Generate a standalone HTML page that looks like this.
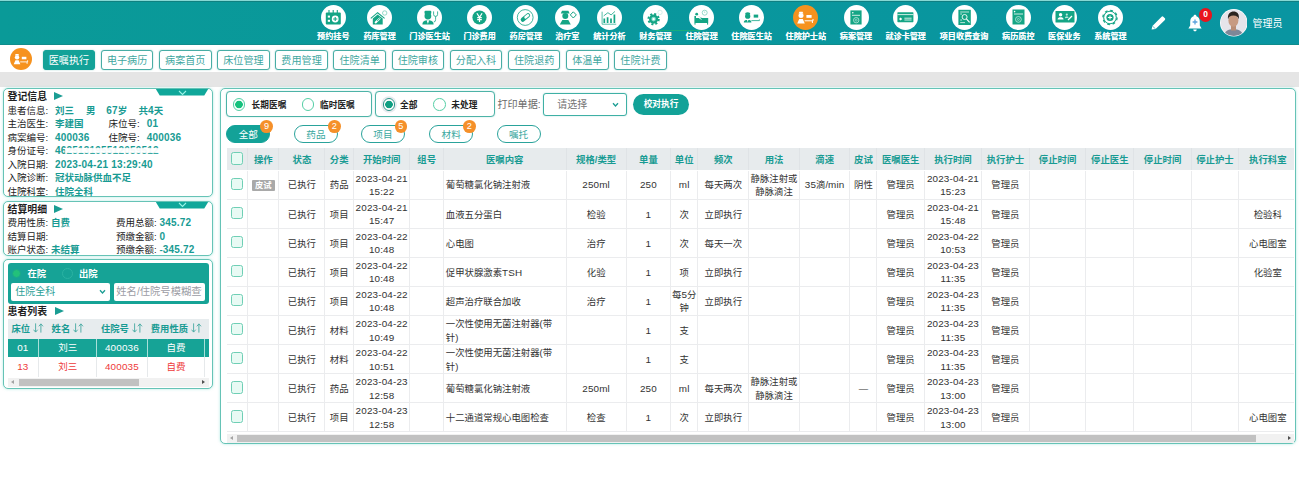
<!DOCTYPE html><html lang="zh-CN"><head><meta charset="utf-8"><title>住院护士站 - 医嘱执行</title><style>
*{box-sizing:border-box;margin:0;padding:0}
html,body{width:1299px;height:500px;overflow:hidden;background:#fff}
body{position:relative;font-family:"Liberation Sans","Noto Sans CJK SC",sans-serif;font-size:9.5px;color:#333;line-height:1}
.abs{position:absolute}
#hdr{position:absolute;left:0;top:0;width:1299px;height:45px;background:linear-gradient(90deg,#0a9a98 0%,#09979c 45%,#0995a1 100%);border-top:1px solid #86d8d4;border-bottom:1px solid #0f8c8c;box-shadow:inset 0 1px 0 rgba(20,110,108,.55)}
.nv{position:absolute;top:0;width:80px;margin-left:-40px;text-align:center;color:#fff}
.nv .ic{position:absolute;left:27.5px;top:4.6px;width:25px;height:25px;border-radius:50%;background:#fff}
.nv .ic.on{background:#f6921e}
.nv .ic svg{position:absolute;left:0;top:0;width:25px;height:25px}
.nv .lb{position:absolute;left:-10px;width:100px;top:32.2px;font-size:8.1px;font-weight:700;line-height:10px;text-shadow:0 0 .6px rgba(255,255,255,.7);white-space:nowrap;text-align:center}
#tabs{position:absolute;left:0;top:45px;width:1299px;height:27.4px;background:#fff}
#band{position:absolute;left:0;top:72.4px;width:1299px;height:14.6px;background:#e5e5e5}
.tab{position:absolute;top:50px;height:20px;border:1px solid #48ada5;border-radius:3px;color:#3fa79f;font-size:10.1px;line-height:20.4px;text-align:center;background:#fff;box-shadow:0 0 1.5px rgba(22,157,148,.5)}
.tab.on{background:#13a298;color:#fff;border-color:#13a298}
.panel{position:absolute;border:1px solid #66c3b6;border-radius:5px;background:#fff;box-shadow:0 0 3px rgba(110,215,200,.55)}
.ptitle{position:absolute;font-size:9.9px;font-weight:700;color:#1f1f1f;white-space:nowrap;line-height:12px}
.tri{position:absolute;width:0;height:0;border-left:9px solid #1a9d93;border-top:4.8px solid transparent;border-bottom:4.8px solid transparent}
.fold{position:absolute;width:53px;height:7px;background:#10a79a;clip-path:polygon(0 0,100% 0,92% 100%,8% 100%)}
.row{position:absolute;white-space:nowrap;font-size:9.5px;line-height:12px;color:#222}
.row b{color:#189b93;font-weight:700}

.n{font-size:9.9px;letter-spacing:.16px}
b .n,b.n{font-size:10px;letter-spacing:.2px}
.gb{position:absolute;top:91px;height:25.6px;border:1px solid #4db3a7;border-radius:4px;background:#fff;box-shadow:0 0 1.5px rgba(22,157,148,.4)}
.rd{position:absolute;width:12.6px;height:12.6px;border-radius:50%;border:1px solid #56cfa6;background:#fff}
.rd.on{background:radial-gradient(circle,#15c17d 0,#15c17d 3.5px,#f2fffb 4.1px)}
.rd.fc{border-color:#2b9488;box-shadow:0 0 0 1.8px #e6eaee;background:radial-gradient(circle,#0f9f82 0,#0f9f82 3.5px,#fff 4.1px)}
.rl{position:absolute;top:99.7px;font-size:8.7px;font-weight:700;color:#222;line-height:11px;white-space:nowrap}
.pill{position:absolute;top:124.6px;height:18.8px;border:1px solid #2aa39b;border-radius:9.4px;background:#fff;color:#3aa8a0;font-size:9.6px;line-height:18.2px;text-align:center}
.pill.on{background:#13a298;color:#fff;border-color:#13a298}
.bdg{position:absolute;top:120.1px;width:12.8px;height:12.8px;border-radius:50%;background:#f5902a;color:#fff;font-size:9.2px;line-height:12.8px;text-align:center}
.c{padding-top:1px;position:absolute;display:flex;align-items:center;justify-content:center;text-align:center;border-right:1px solid #ebecee;border-bottom:1px solid #ebecee;font-size:9.4px;line-height:13.4px;color:#333;white-space:nowrap}
.c.h{padding-top:2px;padding-bottom:0;color:#189b93;font-weight:700;font-size:9.4px;border-bottom:none;border-right-color:#dfe3e6}
.c.l{justify-content:flex-start;text-align:left;padding-left:2px}
.cbx{display:inline-block;width:12.5px;height:12.5px;border:1px solid #6fcfb5;border-radius:2.5px;background:#e8faf4;vertical-align:middle;margin-top:-4.4px}
.ps{display:inline-block;width:22.5px;height:11px;background:#a9a9a9;color:#fff;font-weight:700;font-size:8.3px;line-height:11px;border-radius:1px}
</style></head><body>
<div id="hdr"></div>
<div class="nv" style="left:333.3px"><div class="ic"><svg viewBox="0 0 25 25"><rect x="4.8" y="7.6" width="15" height="12" rx="1" fill="#14a585"/><path d="M8 5v3M12.2 5v3M16.3 5v3" stroke="#14a585" stroke-width="1.1"/><rect x="6.8" y="10.6" width="2.2" height="2" fill="#fff"/><rect x="6.8" y="14.8" width="2.2" height="2" fill="#fff"/><circle cx="14.2" cy="14" r="3.4" fill="#fff"/><path d="M14.2 11.9v4.2M12.1 14h4.2" stroke="#14a585" stroke-width="1.1"/></svg></div><div class="lb">预约挂号</div></div>
<div class="nv" style="left:379.6px"><div class="ic"><svg viewBox="0 0 25 25"><path d="M3.8 13.4 L10.6 7.7 L17.6 13.4" fill="none" stroke="#14a585" stroke-width="1.1"/><path d="M5.8 13.6 L10.7 9.6 L15.7 13.6 V19.5 H5.8Z" fill="#14a585"/><path d="M8.6 17.4 L12.6 13.6" stroke="#fff" stroke-width="2" stroke-linecap="round"/><path d="M10.4 15.7 L12.6 13.6" stroke="#14a585" stroke-width="0.9" stroke-linecap="round"/><circle cx="17.7" cy="8" r="2.2" fill="none" stroke="#7fd0bd" stroke-width="0.8"/></svg></div><div class="lb">药库管理</div></div>
<div class="nv" style="left:429.6px"><div class="ic"><svg viewBox="0 0 25 25"><circle cx="10.9" cy="11" r="3.4" fill="#14a585"/><rect x="7.5" y="5.8" width="6.8" height="3.2" rx="1" fill="#14a585"/><path d="M5.4 19.5 C5.4 16.2 7.6 15.2 10.9 15.2 C14.2 15.2 16.6 16.2 16.6 19.5Z" fill="#14a585"/><path d="M9.6 15.2 L10.9 19 L12.2 15.2Z" fill="#fff"/><path d="M16.6 6.4 V9.4 A2 2 0 0 0 20.6 9.4 V6.4 M18.6 11.4 V14.5 Q18.6 17 16.8 17" fill="none" stroke="#14a585" stroke-width="0.8"/></svg></div><div class="lb">门诊医生站</div></div>
<div class="nv" style="left:479.6px"><div class="ic"><svg viewBox="0 0 25 25"><circle cx="12.5" cy="12.5" r="7.1" fill="#14a585"/><path d="M9.9 8.2 L12.5 12.3 L15.1 8.2 M12.5 12.3 V17 M10.2 12.6 H14.8 M10.2 14.6 H14.8" fill="none" stroke="#fff" stroke-width="1.2"/></svg></div><div class="lb">门诊费用</div></div>
<div class="nv" style="left:525.8px"><div class="ic"><svg viewBox="0 0 25 25"><circle cx="12.2" cy="12.5" r="7.9" fill="none" stroke="#14a585" stroke-width="0.8"/><path d="M9.8 14.7 L15 10.3" stroke="#14a585" stroke-width="4.2" stroke-linecap="round"/><path d="M12.6 12.3 L15 10.3" stroke="#fff" stroke-width="2.6" stroke-linecap="round"/></svg></div><div class="lb">药房管理</div></div>
<div class="nv" style="left:567.3px"><div class="ic"><svg viewBox="0 0 25 25"><circle cx="10.3" cy="11" r="3" fill="#14a585"/><path d="M5.8 8.4 L7 5.8 H13.4 L14.6 8.4Z" fill="#14a585"/><path d="M4.8 19.5 L7.3 15 H13.3 L15.8 19.5Z" fill="#14a585"/><path d="M18.3 6.8 L21.3 9.9 L18.3 13 L15.3 9.9Z" fill="#fff" stroke="#14a585" stroke-width="1"/></svg></div><div class="lb">治疗室</div></div>
<div class="nv" style="left:609.4px"><div class="ic"><svg viewBox="0 0 25 25"><path d="M5.1 6.7 V19.2 H19.2" fill="none" stroke="#14a585" stroke-width="0.7"/><path d="M7.3 13.5V18 M10.6 12.2V18 M14 13.5V18 M17.4 9.6V18" stroke="#14a585" stroke-width="1.7"/><path d="M6.7 10.9 L10.9 7.7 L14.1 9.9 L18 6.4" fill="none" stroke="#14a585" stroke-width="0.8"/></svg></div><div class="lb">统计分析</div></div>
<div class="nv" style="left:655.5px"><div class="ic"><svg viewBox="0 0 25 25"><circle cx="10.6" cy="14.1" r="4.6" fill="#14a585"/><circle cx="10.6" cy="14.1" r="5.2" fill="none" stroke="#14a585" stroke-width="1.9" stroke-dasharray="2.05 2.03"/><circle cx="10.6" cy="14.1" r="2.3" fill="#7fdccb"/><circle cx="10.6" cy="14.1" r="1.2" fill="#fff"/><circle cx="17" cy="7.4" r="2.2" fill="none" stroke="#c9ece4" stroke-width="0.8"/></svg></div><div class="lb">财务管理</div></div>
<div class="nv" style="left:701.6px"><div class="ic"><svg viewBox="0 0 25 25"><path d="M5.4 10.9 H7 V13 H19.2 V18 H5.4Z" fill="#14a585"/><path d="M6 18V19.6 M18.6 18V19.6" stroke="#14a585" stroke-width="1"/><circle cx="7.7" cy="9.2" r="1.4" fill="#14a585"/><path d="M7.4 11.2 L12.5 14.4" stroke="#fff" stroke-width="0.9"/><path d="M8.5 10.8 L13 13.6 L13 13 Z" fill="#14a585"/><circle cx="15.7" cy="7.7" r="2.5" fill="none" stroke="#7fd0bd" stroke-width="0.8"/><path d="M15.7 6.5V7.9" stroke="#7fd0bd" stroke-width="0.7"/></svg></div><div class="lb">住院管理</div></div>
<div class="nv" style="left:751.6px"><div class="ic"><svg viewBox="0 0 25 25"><circle cx="8.7" cy="11.2" r="2.6" fill="#14a585"/><path d="M6.3 9.4 V8 Q8.7 6.4 11.1 8 V9.4Z" fill="#14a585"/><path d="M4.8 17.6 C4.8 15.4 6 15 8.7 15 C11.4 15 12.4 15.4 12.4 17.6Z" fill="#14a585"/><path d="M8 15 L8.7 17.3 L9.4 15Z" fill="#fff"/><rect x="14.7" y="9.6" width="4.5" height="3" fill="#14a585"/><path d="M12.4 15.6 H20.4 V14.4" fill="none" stroke="#14a585" stroke-width="0.8"/></svg></div><div class="lb">住院医生站</div></div>
<div class="nv" style="left:805.8px"><div class="ic on"><svg viewBox="0 0 25 25"><circle cx="8" cy="10.6" r="2.5" fill="#fff"/><path d="M5.6 8.6 L6.4 6.8 H9.6 L10.4 8.6Z" fill="#fff"/><path d="M4.2 18.4 L6.2 14 H9.8 L11.8 18.4Z" fill="#fff"/><rect x="13.4" y="10" width="5.2" height="2.8" fill="#fff"/><path d="M11.6 15.8 H20 V14 M19.4 15.8 V18" fill="none" stroke="#fff" stroke-width="1"/></svg></div><div class="lb">住院护士站</div></div>
<div class="nv" style="left:856.0px"><div class="ic"><svg viewBox="0 0 25 25"><rect x="6.4" y="5.4" width="11.2" height="14.1" fill="#14a585"/><circle cx="8.8" cy="7.8" r="0.8" fill="#fff"/><path d="M8 10.3 H16" stroke="#fff" stroke-width="0.8"/><circle cx="12.2" cy="15.2" r="2.7" fill="none" stroke="#bfeadf" stroke-width="0.8"/><circle cx="12.2" cy="15.2" r="1" fill="none" stroke="#bfeadf" stroke-width="0.6"/></svg></div><div class="lb">病案管理</div></div>
<div class="nv" style="left:905.7px"><div class="ic"><svg viewBox="0 0 25 25"><rect x="4.4" y="7.2" width="16" height="10" rx="0.6" fill="#14a585"/><path d="M4.4 9.6 H20.4" stroke="#fff" stroke-width="0.8"/><path d="M7.6 12.4 L9.2 14 L7.6 15.6 L6 14Z" fill="#fff"/><path d="M11.4 13.2 H18.6 M11.4 15 H18.6" stroke="#fff" stroke-width="0.8"/></svg></div><div class="lb">就诊卡管理</div></div>
<div class="nv" style="left:964.0px"><div class="ic"><svg viewBox="0 0 25 25"><rect x="6.4" y="4.8" width="12.4" height="15.2" fill="#14a585"/><path d="M8.2 7 H17 M8.2 9 H10 M8.2 15 H10 M8.2 17.6 H13" stroke="#fff" stroke-width="0.7"/><circle cx="12.6" cy="12" r="2.5" fill="none" stroke="#fff" stroke-width="0.9"/><path d="M14.4 13.8 L17.6 17.4" stroke="#fff" stroke-width="1.1"/></svg></div><div class="lb">项目收费查询</div></div>
<div class="nv" style="left:1018.3px"><div class="ic"><svg viewBox="0 0 25 25"><rect x="6.5" y="4.5" width="12" height="15" fill="#14a585"/><circle cx="8.6" cy="6.6" r="0.8" fill="#fff"/><path d="M8 9 H17" stroke="#fff" stroke-width="0.8"/><circle cx="12.4" cy="14.4" r="2.9" fill="none" stroke="#bfeadf" stroke-width="0.8"/><circle cx="12.4" cy="14.4" r="1" fill="none" stroke="#bfeadf" stroke-width="0.6"/></svg></div><div class="lb">病历质控</div></div>
<div class="nv" style="left:1064.3px"><div class="ic"><svg viewBox="0 0 25 25"><rect x="3.5" y="6" width="19" height="11.5" rx="0.6" fill="#14a585"/><circle cx="8.6" cy="9.8" r="1.7" fill="#fff"/><path d="M5.6 14.6 C5.6 12.6 7 12.2 8.6 12.2 C10.2 12.2 11.6 12.6 11.6 14.6Z" fill="#fff"/><circle cx="14.8" cy="9.6" r="1.1" fill="#bfeadf"/><path d="M13 13.2 C13 12 13.8 11.6 14.8 11.6 C15.8 11.6 16.4 12 16.6 12.8Z" fill="#bfeadf"/><path d="M16 15 L20 11" stroke="#fff" stroke-width="1.2"/></svg></div><div class="lb">医保业务</div></div>
<div class="nv" style="left:1110.4px"><div class="ic"><svg viewBox="0 0 25 25"><circle cx="12" cy="12.5" r="6.3" fill="none" stroke="#14a585" stroke-width="0.8"/><circle cx="12" cy="12.5" r="7.1" fill="none" stroke="#14a585" stroke-width="1.3" stroke-dasharray="2.8 2.78"/><circle cx="12" cy="12.5" r="5.8" fill="#fff"/><circle cx="12" cy="12.5" r="6.2" fill="none" stroke="#14a585" stroke-width="0.7"/><circle cx="12" cy="12.5" r="3.6" fill="#14a585"/><path d="M12 10.4V14.6M9.9 12.5H14.1" stroke="#fff" stroke-width="1.1"/></svg></div><div class="lb">系统管理</div></div>
<svg class="abs" style="left:1150px;top:14px" width="18" height="18" viewBox="0 0 18 18"><path d="M1.6 15.6 L2.4 11.9 L11.6 2.7 Q12.4 1.9 13.3 2.7 L14.9 4.3 Q15.6 5.1 14.9 5.9 L5.6 15.1Z" fill="#fff"/><path d="M2.7 12.2 L5.3 14.8" stroke="#1395a0" stroke-width="0.7"/></svg><svg class="abs" style="left:1186.5px;top:13.5px" width="16" height="19" viewBox="0 0 16 19"><path d="M8 0.8 C8.9 0.8 9.4 1.4 9.4 2.2 C11.8 2.9 12.8 5 12.8 7.6 V11.6 L14.6 14.4 H1.4 L3.2 11.6 V7.6 C3.2 5 4.2 2.9 6.6 2.2 C6.6 1.4 7.1 0.8 8 0.8Z" fill="#fff"/><path d="M6.2 15.6 H9.8 A1.8 1.8 0 0 1 6.2 15.6Z" fill="#fff"/><path d="M8 5.6V10.4M5.6 8H10.4" stroke="#5aa3dc" stroke-width="1.3"/></svg><div class="abs" style="left:1198.7px;top:8.1px;width:13.6px;height:13.6px;border-radius:50%;background:#e9141c;color:#fff;font-size:8.4px;font-weight:700;line-height:13.6px;text-align:center">0</div><svg class="abs" style="left:1219.5px;top:9.3px" width="27.6" height="27.6" viewBox="0 0 27.6 27.6"><defs><clipPath id="avc"><circle cx="13.8" cy="13.8" r="13.1"/></clipPath></defs><circle cx="13.8" cy="13.8" r="13.8" fill="#fff"/><g clip-path="url(#avc)"><rect width="27.6" height="27.6" fill="#e6e4ea"/><path d="M4 27.6 C4 22 8 20.2 13.4 20.2 C18.8 20.2 23 22 23 27.6Z" fill="#7d8798"/><rect x="11" y="16" width="5" height="5.5" fill="#b98d76"/><ellipse cx="13.4" cy="11.6" rx="5" ry="6.2" fill="#c79a82"/><path d="M8 10.4 C7.4 4.6 10.4 2.6 13.6 2.6 C17 2.6 19.6 4.8 18.8 10.4 C18 7.8 16.6 6.6 13.4 6.6 C10.4 6.6 8.8 7.8 8 10.4Z" fill="#2b2420"/></g></svg>
<div class="abs" style="left:656px;top:30px;width:45px;height:0.8px;background:#22c064;opacity:.55"></div>
<div class="abs" style="left:1252.4px;top:18.4px;color:#fff;font-size:10px;line-height:12px;white-space:nowrap">管理员</div>
<div id="tabs"></div><div id="band"></div>
<div class="abs" style="left:10px;top:47.5px;width:22px;height:22px;border-radius:50%;background:#f6921e"></div><svg class="abs" style="left:10px;top:47.5px" width="22" height="22" viewBox="0 0 25 25"><circle cx="8" cy="10.6" r="2.5" fill="#fff"/><path d="M5.6 8.6 L6.4 6.8 H9.6 L10.4 8.6Z" fill="#fff"/><path d="M4.2 18.4 L6.2 14 H9.8 L11.8 18.4Z" fill="#fff"/><rect x="13.4" y="10" width="5.2" height="2.8" fill="#fff"/><path d="M11.6 15.8 H20 V14 M19.4 15.8 V18" fill="none" stroke="#fff" stroke-width="1"/></svg>
<div class="tab on" style="left:42.7px;width:52.5px">医嘱执行</div>
<div class="tab" style="left:100.85px;width:52.5px">电子病历</div>
<div class="tab" style="left:159px;width:52.5px">病案首页</div>
<div class="tab" style="left:217.15px;width:52.5px">床位管理</div>
<div class="tab" style="left:275.3px;width:52.5px">费用管理</div>
<div class="tab" style="left:333.45px;width:52.5px">住院清单</div>
<div class="tab" style="left:391.6px;width:52.5px">住院审核</div>
<div class="tab" style="left:449.75px;width:52.5px">分配入科</div>
<div class="tab" style="left:507.9px;width:52.5px">住院退药</div>
<div class="tab" style="left:566.05px;width:42.5px">体温单</div>
<div class="tab" style="left:614.2px;width:52.7px">住院计费</div>
<div class="panel" style="left:3px;top:88px;width:210px;height:109.4px"></div>
<div class="ptitle" style="left:7.5px;top:91px">登记信息</div><div class="tri" style="left:54.2px;top:91.8px"></div>
<div class="fold" style="left:155.5px;top:88.6px"></div><svg class="abs" style="left:178px;top:89.5px" width="9" height="6" viewBox="0 0 9 6"><path d="M1 1 L4.5 4.5 L8 1" fill="none" stroke="#9af3e6" stroke-width="1.1"/></svg>
<div class="row" style="left:7.5px;top:104.70px">患者信息: <b class="abs" style="left:47.5px">刘三</b><b class="abs" style="left:78.5px">男</b><b class="abs" style="left:98.8px"><span class="n">67</span>岁</b><b class="abs" style="left:131px">共<span class="n">4</span>天</b></div>
<div class="row" style="left:7.5px;top:118.25px">主治医生: <b class="abs" style="left:47.5px">李建国</b><span class="abs" style="left:101px">床位号:</span><b class="abs" style="left:139.3px"><span class="n">01</span></b></div>
<div class="row" style="left:7.5px;top:131.80px">病案编号: <b class="abs" style="left:47.5px"><span class="n">400036</span></b><span class="abs" style="left:101px">住院号:</span><b class="abs" style="left:139.3px"><span class="n">400036</span></b></div>
<div class="row" style="left:7.5px;top:145.35px">身份证号: <b class="abs" style="left:47.5px"><span class="n">462513195512059512</span></b></div>
<div class="row" style="left:7.5px;top:158.90px">入院日期: <b class="abs" style="left:47.5px"><span class="n">2023-04-21 13:29:40</span></b></div>
<div class="row" style="left:7.5px;top:172.45px">入院诊断: <b class="abs" style="left:47.5px">冠状动脉供血不足</b></div>
<div class="row" style="left:7.5px;top:186.00px">住院科室: <b class="abs" style="left:47.5px">住院全科</b></div>
<div class="abs" style="left:66px;top:149.3px;width:94px;height:3.2px;background:#fff;opacity:.95;box-shadow:0 0 1px 0.6px rgba(255,255,255,.9)"></div>
<div class="panel" style="left:3px;top:201px;width:210px;height:55.2px"></div>
<div class="ptitle" style="left:7.5px;top:203.7px">结算明细</div><div class="tri" style="left:54.2px;top:204.5px"></div>
<div class="fold" style="left:155.5px;top:201.5px"></div><svg class="abs" style="left:178px;top:202px" width="9" height="6" viewBox="0 0 9 6"><path d="M1 1 L4.5 4.5 L8 1" fill="none" stroke="#9af3e6" stroke-width="1.1"/></svg>
<div class="row" style="left:7.5px;top:217.10px">费用性质: <b class="abs" style="left:43.5px">自费</b><span class="abs" style="left:108.5px">费用总额:</span><b class="abs" style="left:152px"><span class="n">345.72</span></b></div>
<div class="row" style="left:7.5px;top:230.60px">结算日期:<span class="abs" style="left:108.5px">预缴金额:</span><b class="abs" style="left:152px"><span class="n">0</span></b></div>
<div class="row" style="left:7.5px;top:244.10px">账户状态: <b class="abs" style="left:43.5px">未结算</b><span class="abs" style="left:108.5px">预缴余额:</span><b class="abs" style="left:152px">-<span class="n">345.72</span></b></div>
<div class="panel" style="left:3px;top:259px;width:210px;height:129.5px"></div>
<div class="abs" style="left:7.5px;top:262.5px;width:201px;height:41.5px;background:#16a396;border-radius:3px"></div>
<div class="abs" style="left:11.5px;top:268.5px;width:9.5px;height:9.5px;border-radius:50%;background:#22c17a;border:1.5px solid #1aa88c"></div>
<div class="abs" style="left:27.5px;top:267.5px;font-size:9.3px;font-weight:700;color:#fff;line-height:12px">在院</div>
<div class="abs" style="left:61.5px;top:268px;width:11px;height:11px;border-radius:50%;background:#16a396;border:1px solid #2bb3a3"></div>
<div class="abs" style="left:79px;top:267.5px;font-size:9.3px;font-weight:700;color:#fff;line-height:12px">出院</div>
<div class="abs" style="left:10.8px;top:283px;width:99.5px;height:18px;background:#fff;border-radius:2px;color:#2a9f97;font-size:10px;line-height:18px;padding-left:4.5px">住院全科<svg class="abs" style="left:88.5px;top:6px" width="7" height="6" viewBox="0 0 7 6"><path d="M1 1.3 L3.5 4 L6 1.3" fill="none" stroke="#1a9d93" stroke-width="1.3"/></svg></div>
<div class="abs" style="left:113.5px;top:283px;width:91.5px;height:18px;background:#fff;border-radius:2px"><div class="abs" style="left:2.8px;top:0;width:85.6px;height:18px;overflow:hidden;white-space:nowrap;color:#9c9ca4;font-size:10.3px;line-height:18px">姓名/住院号模糊查询</div></div>
<div class="ptitle" style="left:7.5px;top:306.4px">患者列表</div><div class="tri" style="left:54.8px;top:307px"></div>
<div class="abs" style="left:7.5px;top:318.5px;width:201.8px;height:20px;background:#e7ecee"></div>
<div class="abs" style="left:11.4px;top:322.5px;font-size:9.3px;font-weight:700;color:#189b93;line-height:12px;white-space:nowrap">床位<svg style="display:inline-block;vertical-align:-1.6px;margin-left:3px" width="11" height="10" viewBox="0 0 11 10"><path d="M2.6 0.4V9M0.5 6.7L2.6 9.1L4.7 6.7M7.9 9.6V0.9M5.8 3.3L7.9 0.9L10 3.3" fill="none" stroke="#45a9a1" stroke-width="0.9"/></svg></div>
<div class="abs" style="left:51.6px;top:322.5px;font-size:9.3px;font-weight:700;color:#189b93;line-height:12px;white-space:nowrap">姓名<svg style="display:inline-block;vertical-align:-1.6px;margin-left:3px" width="11" height="10" viewBox="0 0 11 10"><path d="M2.6 0.4V9M0.5 6.7L2.6 9.1L4.7 6.7M7.9 9.6V0.9M5.8 3.3L7.9 0.9L10 3.3" fill="none" stroke="#45a9a1" stroke-width="0.9"/></svg></div>
<div class="abs" style="left:101px;top:322.5px;font-size:9.3px;font-weight:700;color:#189b93;line-height:12px;white-space:nowrap">住院号<svg style="display:inline-block;vertical-align:-1.6px;margin-left:3px" width="11" height="10" viewBox="0 0 11 10"><path d="M2.6 0.4V9M0.5 6.7L2.6 9.1L4.7 6.7M7.9 9.6V0.9M5.8 3.3L7.9 0.9L10 3.3" fill="none" stroke="#45a9a1" stroke-width="0.9"/></svg></div>
<div class="abs" style="left:150.8px;top:322.5px;font-size:9.3px;font-weight:700;color:#189b93;line-height:12px;white-space:nowrap">费用性质<svg style="display:inline-block;vertical-align:-1.6px;margin-left:3px" width="11" height="10" viewBox="0 0 11 10"><path d="M2.6 0.4V9M0.5 6.7L2.6 9.1L4.7 6.7M7.9 9.6V0.9M5.8 3.3L7.9 0.9L10 3.3" fill="none" stroke="#45a9a1" stroke-width="0.9"/></svg></div>
<div class="abs" style="left:7.5px;top:338.5px;width:201.8px;height:18.7px;background:#16a396"></div>
<div class="abs" style="left:7.5px;top:338.5px;width:31.6px;height:18.7px;line-height:18.7px;text-align:center;color:#fff;font-size:9.5px;border-right:1px solid #a8e0d9"><span class="n">01</span></div>
<div class="abs" style="left:39.1px;top:338.5px;width:58.1px;height:18.7px;line-height:18.7px;text-align:center;color:#fff;font-size:9.5px;border-right:1px solid #a8e0d9">刘三</div>
<div class="abs" style="left:97.2px;top:338.5px;width:50.5px;height:18.7px;line-height:18.7px;text-align:center;color:#fff;font-size:9.5px;border-right:1px solid #a8e0d9"><span class="n">400036</span></div>
<div class="abs" style="left:147.7px;top:338.5px;width:57.5px;height:18.7px;line-height:18.7px;text-align:center;color:#fff;font-size:9.5px;border-right:1px solid #a8e0d9">自费</div>
<div class="abs" style="left:7.5px;top:357.2px;width:31.6px;height:20.3px;line-height:20px;text-align:center;color:#ee3a3a;font-size:9.5px;border-right:1px solid #e6e9eb"><span class="n">13</span></div>
<div class="abs" style="left:39.1px;top:357.2px;width:58.1px;height:20.3px;line-height:20px;text-align:center;color:#ee3a3a;font-size:9.5px;border-right:1px solid #e6e9eb">刘三</div>
<div class="abs" style="left:97.2px;top:357.2px;width:50.5px;height:20.3px;line-height:20px;text-align:center;color:#ee3a3a;font-size:9.5px;border-right:1px solid #e6e9eb"><span class="n">400035</span></div>
<div class="abs" style="left:147.7px;top:357.2px;width:57.5px;height:20.3px;line-height:20px;text-align:center;color:#ee3a3a;font-size:9.5px;border-right:1px solid #e6e9eb">自费</div>
<div class="abs" style="left:7.5px;top:378.3px;width:201.8px;height:8.3px;background:#f1f1f1"></div>
<div class="abs" style="left:18.6px;top:379.3px;width:120.4px;height:6.3px;background:#c1c1c1"></div>
<div class="abs" style="left:11px;top:380.4px;width:0;height:0;border-right:3px solid #a3a3a3;border-top:2.2px solid transparent;border-bottom:2.2px solid transparent"></div>
<div class="abs" style="left:202px;top:380.4px;width:0;height:0;border-left:3px solid #505050;border-top:2.2px solid transparent;border-bottom:2.2px solid transparent"></div>
<div class="panel" style="left:220px;top:88.2px;width:1076px;height:356.3px"></div>
<div class="gb" style="left:225.5px;width:146px"></div><div class="gb" style="left:375px;width:119.5px"></div>
<div class="rd on" style="left:232.8px;top:98.3px;"></div>
<div class="rd" style="left:301.8px;top:98.3px;"></div>
<div class="rd on fc" style="left:382.5px;top:98.3px;"></div>
<div class="rd" style="left:433.3px;top:98.3px;"></div>
<div class="rl" style="left:251.6px">长期医嘱</div>
<div class="rl" style="left:320px">临时医嘱</div>
<div class="rl" style="left:400.1px">全部</div>
<div class="rl" style="left:451.3px">未处理</div>
<div class="abs" style="left:497.4px;top:98.5px;font-size:10.1px;line-height:12px;color:#6a6a6a;white-space:nowrap">打印单据:</div>
<div class="abs" style="left:543.2px;top:92.6px;width:84.3px;height:23.6px;border:1px solid #3fb0a5;border-radius:3px;background:#fff;color:#757575;font-size:10px;line-height:21.5px;padding-left:13px;box-shadow:0 0 1.5px rgba(22,157,148,.4)">请选择<svg class="abs" style="left:68px;top:8px" width="7" height="6" viewBox="0 0 7 6"><path d="M1 1.3 L3.5 4 L6 1.3" fill="none" stroke="#1a9d93" stroke-width="1.3"/></svg></div>
<div class="abs" style="left:633px;top:94px;width:56px;height:21px;border-radius:10.5px;background:#13a298;color:#fff;font-size:8.7px;font-weight:700;line-height:21px;text-align:center">校对执行</div>
<div class="pill on" style="left:226.2px;width:44.3px">全部</div>
<div class="bdg" style="left:260.1px">9</div>
<div class="pill" style="left:293.6px;width:44.6px">药品</div>
<div class="bdg" style="left:327.8px">2</div>
<div class="pill" style="left:360.9px;width:44px">项目</div>
<div class="bdg" style="left:394.5px">5</div>
<div class="pill" style="left:429px;width:44.3px">材料</div>
<div class="bdg" style="left:462.9px">2</div>
<div class="pill" style="left:496.5px;width:44.2px">嘱托</div>
<div class="abs" style="left:226.8px;top:148px;width:1067.5px;height:295px;overflow:hidden">
<div class="abs" style="left:0;top:0;width:1075px;height:22px;background:#e7ebed"></div>
<div class="c h" style="left:0.0px;top:0.00px;width:21.6px;height:22.00px"><div><span class="cbx"></span></div></div>
<div class="c h" style="left:21.6px;top:0.00px;width:30.9px;height:22.00px"><div>操作</div></div>
<div class="c h" style="left:52.5px;top:0.00px;width:46.2px;height:22.00px"><div>状态</div></div>
<div class="c h" style="left:98.7px;top:0.00px;width:28.3px;height:22.00px"><div>分类</div></div>
<div class="c h" style="left:127.0px;top:0.00px;width:56.7px;height:22.00px"><div>开始时间</div></div>
<div class="c h" style="left:183.7px;top:0.00px;width:33.3px;height:22.00px"><div>组号</div></div>
<div class="c h" style="left:217.0px;top:0.00px;width:122.8px;height:22.00px"><div>医嘱内容</div></div>
<div class="c h" style="left:339.8px;top:0.00px;width:60.1px;height:22.00px"><div>规格/类型</div></div>
<div class="c h" style="left:399.9px;top:0.00px;width:44.5px;height:22.00px"><div>单量</div></div>
<div class="c h" style="left:444.4px;top:0.00px;width:27.1px;height:22.00px"><div>单位</div></div>
<div class="c h" style="left:471.5px;top:0.00px;width:51.0px;height:22.00px"><div>频次</div></div>
<div class="c h" style="left:522.5px;top:0.00px;width:50.5px;height:22.00px"><div>用法</div></div>
<div class="c h" style="left:573.0px;top:0.00px;width:50.7px;height:22.00px"><div>滴速</div></div>
<div class="c h" style="left:623.7px;top:0.00px;width:27.0px;height:22.00px"><div>皮试</div></div>
<div class="c h" style="left:650.7px;top:0.00px;width:47.3px;height:22.00px"><div>医嘱医生</div></div>
<div class="c h" style="left:698.0px;top:0.00px;width:57.3px;height:22.00px"><div>执行时间</div></div>
<div class="c h" style="left:755.3px;top:0.00px;width:47.7px;height:22.00px"><div>执行护士</div></div>
<div class="c h" style="left:803.0px;top:0.00px;width:56.6px;height:22.00px"><div>停止时间</div></div>
<div class="c h" style="left:859.6px;top:0.00px;width:47.9px;height:22.00px"><div>停止医生</div></div>
<div class="c h" style="left:907.5px;top:0.00px;width:57.5px;height:22.00px"><div>停止时间</div></div>
<div class="c h" style="left:965.0px;top:0.00px;width:47.3px;height:22.00px"><div>停止护士</div></div>
<div class="c h" style="left:1012.3px;top:0.00px;width:58.4px;height:22.00px"><div>执行科室</div></div>
<div class="c " style="left:0.0px;top:22.65px;width:21.6px;height:29.07px"><div><span class="cbx"></span></div></div>
<div class="c " style="left:21.6px;top:22.65px;width:30.9px;height:29.07px"><div><span class="ps">皮试</span></div></div>
<div class="c " style="left:52.5px;top:22.65px;width:46.2px;height:29.07px"><div>已执行</div></div>
<div class="c " style="left:98.7px;top:22.65px;width:28.3px;height:29.07px"><div>药品</div></div>
<div class="c " style="left:127.0px;top:22.65px;width:56.7px;height:29.07px"><div><span class="n">2023-04-21</span><br><span class="n">15:22</span></div></div>
<div class="c " style="left:183.7px;top:22.65px;width:33.3px;height:29.07px"><div></div></div>
<div class="c l" style="left:217.0px;top:22.65px;width:122.8px;height:29.07px"><div>葡萄糖氯化钠注射液</div></div>
<div class="c " style="left:339.8px;top:22.65px;width:60.1px;height:29.07px"><div><span class="n">250ml</span></div></div>
<div class="c " style="left:399.9px;top:22.65px;width:44.5px;height:29.07px"><div><span class="n">250</span></div></div>
<div class="c " style="left:444.4px;top:22.65px;width:27.1px;height:29.07px"><div><span class="n">ml</span></div></div>
<div class="c " style="left:471.5px;top:22.65px;width:51.0px;height:29.07px"><div>每天两次</div></div>
<div class="c " style="left:522.5px;top:22.65px;width:50.5px;height:29.07px"><div>静脉注射或<br>静脉滴注</div></div>
<div class="c " style="left:573.0px;top:22.65px;width:50.7px;height:29.07px"><div><span class="n">35</span>滴/<span class="n">min</span></div></div>
<div class="c " style="left:623.7px;top:22.65px;width:27.0px;height:29.07px"><div>阴性</div></div>
<div class="c " style="left:650.7px;top:22.65px;width:47.3px;height:29.07px"><div>管理员</div></div>
<div class="c " style="left:698.0px;top:22.65px;width:57.3px;height:29.07px"><div><span class="n">2023-04-21</span><br><span class="n">15:23</span></div></div>
<div class="c " style="left:755.3px;top:22.65px;width:47.7px;height:29.07px"><div>管理员</div></div>
<div class="c " style="left:803.0px;top:22.65px;width:56.6px;height:29.07px"><div></div></div>
<div class="c " style="left:859.6px;top:22.65px;width:47.9px;height:29.07px"><div></div></div>
<div class="c " style="left:907.5px;top:22.65px;width:57.5px;height:29.07px"><div></div></div>
<div class="c " style="left:965.0px;top:22.65px;width:47.3px;height:29.07px"><div></div></div>
<div class="c " style="left:1012.3px;top:22.65px;width:58.4px;height:29.07px"><div></div></div>
<div class="c " style="left:0.0px;top:51.72px;width:21.6px;height:29.07px"><div><span class="cbx"></span></div></div>
<div class="c " style="left:21.6px;top:51.72px;width:30.9px;height:29.07px"><div></div></div>
<div class="c " style="left:52.5px;top:51.72px;width:46.2px;height:29.07px"><div>已执行</div></div>
<div class="c " style="left:98.7px;top:51.72px;width:28.3px;height:29.07px"><div>项目</div></div>
<div class="c " style="left:127.0px;top:51.72px;width:56.7px;height:29.07px"><div><span class="n">2023-04-21</span><br><span class="n">15:47</span></div></div>
<div class="c " style="left:183.7px;top:51.72px;width:33.3px;height:29.07px"><div></div></div>
<div class="c l" style="left:217.0px;top:51.72px;width:122.8px;height:29.07px"><div>血液五分蛋白</div></div>
<div class="c " style="left:339.8px;top:51.72px;width:60.1px;height:29.07px"><div>检验</div></div>
<div class="c " style="left:399.9px;top:51.72px;width:44.5px;height:29.07px"><div><span class="n">1</span></div></div>
<div class="c " style="left:444.4px;top:51.72px;width:27.1px;height:29.07px"><div>次</div></div>
<div class="c " style="left:471.5px;top:51.72px;width:51.0px;height:29.07px"><div>立即执行</div></div>
<div class="c " style="left:522.5px;top:51.72px;width:50.5px;height:29.07px"><div></div></div>
<div class="c " style="left:573.0px;top:51.72px;width:50.7px;height:29.07px"><div></div></div>
<div class="c " style="left:623.7px;top:51.72px;width:27.0px;height:29.07px"><div></div></div>
<div class="c " style="left:650.7px;top:51.72px;width:47.3px;height:29.07px"><div>管理员</div></div>
<div class="c " style="left:698.0px;top:51.72px;width:57.3px;height:29.07px"><div><span class="n">2023-04-21</span><br><span class="n">15:48</span></div></div>
<div class="c " style="left:755.3px;top:51.72px;width:47.7px;height:29.07px"><div>管理员</div></div>
<div class="c " style="left:803.0px;top:51.72px;width:56.6px;height:29.07px"><div></div></div>
<div class="c " style="left:859.6px;top:51.72px;width:47.9px;height:29.07px"><div></div></div>
<div class="c " style="left:907.5px;top:51.72px;width:57.5px;height:29.07px"><div></div></div>
<div class="c " style="left:965.0px;top:51.72px;width:47.3px;height:29.07px"><div></div></div>
<div class="c " style="left:1012.3px;top:51.72px;width:58.4px;height:29.07px"><div>检验科</div></div>
<div class="c " style="left:0.0px;top:80.79px;width:21.6px;height:29.07px"><div><span class="cbx"></span></div></div>
<div class="c " style="left:21.6px;top:80.79px;width:30.9px;height:29.07px"><div></div></div>
<div class="c " style="left:52.5px;top:80.79px;width:46.2px;height:29.07px"><div>已执行</div></div>
<div class="c " style="left:98.7px;top:80.79px;width:28.3px;height:29.07px"><div>项目</div></div>
<div class="c " style="left:127.0px;top:80.79px;width:56.7px;height:29.07px"><div><span class="n">2023-04-22</span><br><span class="n">10:48</span></div></div>
<div class="c " style="left:183.7px;top:80.79px;width:33.3px;height:29.07px"><div></div></div>
<div class="c l" style="left:217.0px;top:80.79px;width:122.8px;height:29.07px"><div>心电图</div></div>
<div class="c " style="left:339.8px;top:80.79px;width:60.1px;height:29.07px"><div>治疗</div></div>
<div class="c " style="left:399.9px;top:80.79px;width:44.5px;height:29.07px"><div><span class="n">1</span></div></div>
<div class="c " style="left:444.4px;top:80.79px;width:27.1px;height:29.07px"><div>次</div></div>
<div class="c " style="left:471.5px;top:80.79px;width:51.0px;height:29.07px"><div>每天一次</div></div>
<div class="c " style="left:522.5px;top:80.79px;width:50.5px;height:29.07px"><div></div></div>
<div class="c " style="left:573.0px;top:80.79px;width:50.7px;height:29.07px"><div></div></div>
<div class="c " style="left:623.7px;top:80.79px;width:27.0px;height:29.07px"><div></div></div>
<div class="c " style="left:650.7px;top:80.79px;width:47.3px;height:29.07px"><div>管理员</div></div>
<div class="c " style="left:698.0px;top:80.79px;width:57.3px;height:29.07px"><div><span class="n">2023-04-22</span><br><span class="n">10:53</span></div></div>
<div class="c " style="left:755.3px;top:80.79px;width:47.7px;height:29.07px"><div>管理员</div></div>
<div class="c " style="left:803.0px;top:80.79px;width:56.6px;height:29.07px"><div></div></div>
<div class="c " style="left:859.6px;top:80.79px;width:47.9px;height:29.07px"><div></div></div>
<div class="c " style="left:907.5px;top:80.79px;width:57.5px;height:29.07px"><div></div></div>
<div class="c " style="left:965.0px;top:80.79px;width:47.3px;height:29.07px"><div></div></div>
<div class="c " style="left:1012.3px;top:80.79px;width:58.4px;height:29.07px"><div>心电图室</div></div>
<div class="c " style="left:0.0px;top:109.86px;width:21.6px;height:29.07px"><div><span class="cbx"></span></div></div>
<div class="c " style="left:21.6px;top:109.86px;width:30.9px;height:29.07px"><div></div></div>
<div class="c " style="left:52.5px;top:109.86px;width:46.2px;height:29.07px"><div>已执行</div></div>
<div class="c " style="left:98.7px;top:109.86px;width:28.3px;height:29.07px"><div>项目</div></div>
<div class="c " style="left:127.0px;top:109.86px;width:56.7px;height:29.07px"><div><span class="n">2023-04-22</span><br><span class="n">10:48</span></div></div>
<div class="c " style="left:183.7px;top:109.86px;width:33.3px;height:29.07px"><div></div></div>
<div class="c l" style="left:217.0px;top:109.86px;width:122.8px;height:29.07px"><div>促甲状腺激素<span class="n">TSH</span></div></div>
<div class="c " style="left:339.8px;top:109.86px;width:60.1px;height:29.07px"><div>化验</div></div>
<div class="c " style="left:399.9px;top:109.86px;width:44.5px;height:29.07px"><div><span class="n">1</span></div></div>
<div class="c " style="left:444.4px;top:109.86px;width:27.1px;height:29.07px"><div>项</div></div>
<div class="c " style="left:471.5px;top:109.86px;width:51.0px;height:29.07px"><div>立即执行</div></div>
<div class="c " style="left:522.5px;top:109.86px;width:50.5px;height:29.07px"><div></div></div>
<div class="c " style="left:573.0px;top:109.86px;width:50.7px;height:29.07px"><div></div></div>
<div class="c " style="left:623.7px;top:109.86px;width:27.0px;height:29.07px"><div></div></div>
<div class="c " style="left:650.7px;top:109.86px;width:47.3px;height:29.07px"><div>管理员</div></div>
<div class="c " style="left:698.0px;top:109.86px;width:57.3px;height:29.07px"><div><span class="n">2023-04-23</span><br><span class="n">11:35</span></div></div>
<div class="c " style="left:755.3px;top:109.86px;width:47.7px;height:29.07px"><div>管理员</div></div>
<div class="c " style="left:803.0px;top:109.86px;width:56.6px;height:29.07px"><div></div></div>
<div class="c " style="left:859.6px;top:109.86px;width:47.9px;height:29.07px"><div></div></div>
<div class="c " style="left:907.5px;top:109.86px;width:57.5px;height:29.07px"><div></div></div>
<div class="c " style="left:965.0px;top:109.86px;width:47.3px;height:29.07px"><div></div></div>
<div class="c " style="left:1012.3px;top:109.86px;width:58.4px;height:29.07px"><div>化验室</div></div>
<div class="c " style="left:0.0px;top:138.93px;width:21.6px;height:29.07px"><div><span class="cbx"></span></div></div>
<div class="c " style="left:21.6px;top:138.93px;width:30.9px;height:29.07px"><div></div></div>
<div class="c " style="left:52.5px;top:138.93px;width:46.2px;height:29.07px"><div>已执行</div></div>
<div class="c " style="left:98.7px;top:138.93px;width:28.3px;height:29.07px"><div>项目</div></div>
<div class="c " style="left:127.0px;top:138.93px;width:56.7px;height:29.07px"><div><span class="n">2023-04-22</span><br><span class="n">10:48</span></div></div>
<div class="c " style="left:183.7px;top:138.93px;width:33.3px;height:29.07px"><div></div></div>
<div class="c l" style="left:217.0px;top:138.93px;width:122.8px;height:29.07px"><div>超声治疗联合加收</div></div>
<div class="c " style="left:339.8px;top:138.93px;width:60.1px;height:29.07px"><div>治疗</div></div>
<div class="c " style="left:399.9px;top:138.93px;width:44.5px;height:29.07px"><div><span class="n">1</span></div></div>
<div class="c " style="left:444.4px;top:138.93px;width:27.1px;height:29.07px"><div>每<span class="n">5</span>分<br>钟</div></div>
<div class="c " style="left:471.5px;top:138.93px;width:51.0px;height:29.07px"><div>立即执行</div></div>
<div class="c " style="left:522.5px;top:138.93px;width:50.5px;height:29.07px"><div></div></div>
<div class="c " style="left:573.0px;top:138.93px;width:50.7px;height:29.07px"><div></div></div>
<div class="c " style="left:623.7px;top:138.93px;width:27.0px;height:29.07px"><div></div></div>
<div class="c " style="left:650.7px;top:138.93px;width:47.3px;height:29.07px"><div>管理员</div></div>
<div class="c " style="left:698.0px;top:138.93px;width:57.3px;height:29.07px"><div><span class="n">2023-04-23</span><br><span class="n">11:35</span></div></div>
<div class="c " style="left:755.3px;top:138.93px;width:47.7px;height:29.07px"><div>管理员</div></div>
<div class="c " style="left:803.0px;top:138.93px;width:56.6px;height:29.07px"><div></div></div>
<div class="c " style="left:859.6px;top:138.93px;width:47.9px;height:29.07px"><div></div></div>
<div class="c " style="left:907.5px;top:138.93px;width:57.5px;height:29.07px"><div></div></div>
<div class="c " style="left:965.0px;top:138.93px;width:47.3px;height:29.07px"><div></div></div>
<div class="c " style="left:1012.3px;top:138.93px;width:58.4px;height:29.07px"><div></div></div>
<div class="c " style="left:0.0px;top:168.00px;width:21.6px;height:29.07px"><div><span class="cbx"></span></div></div>
<div class="c " style="left:21.6px;top:168.00px;width:30.9px;height:29.07px"><div></div></div>
<div class="c " style="left:52.5px;top:168.00px;width:46.2px;height:29.07px"><div>已执行</div></div>
<div class="c " style="left:98.7px;top:168.00px;width:28.3px;height:29.07px"><div>材料</div></div>
<div class="c " style="left:127.0px;top:168.00px;width:56.7px;height:29.07px"><div><span class="n">2023-04-22</span><br><span class="n">10:49</span></div></div>
<div class="c " style="left:183.7px;top:168.00px;width:33.3px;height:29.07px"><div></div></div>
<div class="c l" style="left:217.0px;top:168.00px;width:122.8px;height:29.07px"><div>一次性使用无菌注射器(带<br>针)</div></div>
<div class="c " style="left:339.8px;top:168.00px;width:60.1px;height:29.07px"><div></div></div>
<div class="c " style="left:399.9px;top:168.00px;width:44.5px;height:29.07px"><div><span class="n">1</span></div></div>
<div class="c " style="left:444.4px;top:168.00px;width:27.1px;height:29.07px"><div>支</div></div>
<div class="c " style="left:471.5px;top:168.00px;width:51.0px;height:29.07px"><div></div></div>
<div class="c " style="left:522.5px;top:168.00px;width:50.5px;height:29.07px"><div></div></div>
<div class="c " style="left:573.0px;top:168.00px;width:50.7px;height:29.07px"><div></div></div>
<div class="c " style="left:623.7px;top:168.00px;width:27.0px;height:29.07px"><div></div></div>
<div class="c " style="left:650.7px;top:168.00px;width:47.3px;height:29.07px"><div>管理员</div></div>
<div class="c " style="left:698.0px;top:168.00px;width:57.3px;height:29.07px"><div><span class="n">2023-04-23</span><br><span class="n">11:35</span></div></div>
<div class="c " style="left:755.3px;top:168.00px;width:47.7px;height:29.07px"><div>管理员</div></div>
<div class="c " style="left:803.0px;top:168.00px;width:56.6px;height:29.07px"><div></div></div>
<div class="c " style="left:859.6px;top:168.00px;width:47.9px;height:29.07px"><div></div></div>
<div class="c " style="left:907.5px;top:168.00px;width:57.5px;height:29.07px"><div></div></div>
<div class="c " style="left:965.0px;top:168.00px;width:47.3px;height:29.07px"><div></div></div>
<div class="c " style="left:1012.3px;top:168.00px;width:58.4px;height:29.07px"><div></div></div>
<div class="c " style="left:0.0px;top:197.07px;width:21.6px;height:29.07px"><div><span class="cbx"></span></div></div>
<div class="c " style="left:21.6px;top:197.07px;width:30.9px;height:29.07px"><div></div></div>
<div class="c " style="left:52.5px;top:197.07px;width:46.2px;height:29.07px"><div>已执行</div></div>
<div class="c " style="left:98.7px;top:197.07px;width:28.3px;height:29.07px"><div>材料</div></div>
<div class="c " style="left:127.0px;top:197.07px;width:56.7px;height:29.07px"><div><span class="n">2023-04-22</span><br><span class="n">10:51</span></div></div>
<div class="c " style="left:183.7px;top:197.07px;width:33.3px;height:29.07px"><div></div></div>
<div class="c l" style="left:217.0px;top:197.07px;width:122.8px;height:29.07px"><div>一次性使用无菌注射器(带<br>针)</div></div>
<div class="c " style="left:339.8px;top:197.07px;width:60.1px;height:29.07px"><div></div></div>
<div class="c " style="left:399.9px;top:197.07px;width:44.5px;height:29.07px"><div><span class="n">1</span></div></div>
<div class="c " style="left:444.4px;top:197.07px;width:27.1px;height:29.07px"><div>支</div></div>
<div class="c " style="left:471.5px;top:197.07px;width:51.0px;height:29.07px"><div></div></div>
<div class="c " style="left:522.5px;top:197.07px;width:50.5px;height:29.07px"><div></div></div>
<div class="c " style="left:573.0px;top:197.07px;width:50.7px;height:29.07px"><div></div></div>
<div class="c " style="left:623.7px;top:197.07px;width:27.0px;height:29.07px"><div></div></div>
<div class="c " style="left:650.7px;top:197.07px;width:47.3px;height:29.07px"><div>管理员</div></div>
<div class="c " style="left:698.0px;top:197.07px;width:57.3px;height:29.07px"><div><span class="n">2023-04-23</span><br><span class="n">11:35</span></div></div>
<div class="c " style="left:755.3px;top:197.07px;width:47.7px;height:29.07px"><div>管理员</div></div>
<div class="c " style="left:803.0px;top:197.07px;width:56.6px;height:29.07px"><div></div></div>
<div class="c " style="left:859.6px;top:197.07px;width:47.9px;height:29.07px"><div></div></div>
<div class="c " style="left:907.5px;top:197.07px;width:57.5px;height:29.07px"><div></div></div>
<div class="c " style="left:965.0px;top:197.07px;width:47.3px;height:29.07px"><div></div></div>
<div class="c " style="left:1012.3px;top:197.07px;width:58.4px;height:29.07px"><div></div></div>
<div class="c " style="left:0.0px;top:226.14px;width:21.6px;height:29.07px"><div><span class="cbx"></span></div></div>
<div class="c " style="left:21.6px;top:226.14px;width:30.9px;height:29.07px"><div></div></div>
<div class="c " style="left:52.5px;top:226.14px;width:46.2px;height:29.07px"><div>已执行</div></div>
<div class="c " style="left:98.7px;top:226.14px;width:28.3px;height:29.07px"><div>药品</div></div>
<div class="c " style="left:127.0px;top:226.14px;width:56.7px;height:29.07px"><div><span class="n">2023-04-23</span><br><span class="n">12:58</span></div></div>
<div class="c " style="left:183.7px;top:226.14px;width:33.3px;height:29.07px"><div></div></div>
<div class="c l" style="left:217.0px;top:226.14px;width:122.8px;height:29.07px"><div>葡萄糖氯化钠注射液</div></div>
<div class="c " style="left:339.8px;top:226.14px;width:60.1px;height:29.07px"><div><span class="n">250ml</span></div></div>
<div class="c " style="left:399.9px;top:226.14px;width:44.5px;height:29.07px"><div><span class="n">250</span></div></div>
<div class="c " style="left:444.4px;top:226.14px;width:27.1px;height:29.07px"><div><span class="n">ml</span></div></div>
<div class="c " style="left:471.5px;top:226.14px;width:51.0px;height:29.07px"><div>每天两次</div></div>
<div class="c " style="left:522.5px;top:226.14px;width:50.5px;height:29.07px"><div>静脉注射或<br>静脉滴注</div></div>
<div class="c " style="left:573.0px;top:226.14px;width:50.7px;height:29.07px"><div></div></div>
<div class="c " style="left:623.7px;top:226.14px;width:27.0px;height:29.07px"><div>—</div></div>
<div class="c " style="left:650.7px;top:226.14px;width:47.3px;height:29.07px"><div>管理员</div></div>
<div class="c " style="left:698.0px;top:226.14px;width:57.3px;height:29.07px"><div><span class="n">2023-04-23</span><br><span class="n">13:00</span></div></div>
<div class="c " style="left:755.3px;top:226.14px;width:47.7px;height:29.07px"><div>管理员</div></div>
<div class="c " style="left:803.0px;top:226.14px;width:56.6px;height:29.07px"><div></div></div>
<div class="c " style="left:859.6px;top:226.14px;width:47.9px;height:29.07px"><div></div></div>
<div class="c " style="left:907.5px;top:226.14px;width:57.5px;height:29.07px"><div></div></div>
<div class="c " style="left:965.0px;top:226.14px;width:47.3px;height:29.07px"><div></div></div>
<div class="c " style="left:1012.3px;top:226.14px;width:58.4px;height:29.07px"><div></div></div>
<div class="c " style="left:0.0px;top:255.21px;width:21.6px;height:29.07px"><div><span class="cbx"></span></div></div>
<div class="c " style="left:21.6px;top:255.21px;width:30.9px;height:29.07px"><div></div></div>
<div class="c " style="left:52.5px;top:255.21px;width:46.2px;height:29.07px"><div>已执行</div></div>
<div class="c " style="left:98.7px;top:255.21px;width:28.3px;height:29.07px"><div>项目</div></div>
<div class="c " style="left:127.0px;top:255.21px;width:56.7px;height:29.07px"><div><span class="n">2023-04-23</span><br><span class="n">12:58</span></div></div>
<div class="c " style="left:183.7px;top:255.21px;width:33.3px;height:29.07px"><div></div></div>
<div class="c l" style="left:217.0px;top:255.21px;width:122.8px;height:29.07px"><div>十二通道常规心电图检查</div></div>
<div class="c " style="left:339.8px;top:255.21px;width:60.1px;height:29.07px"><div>检查</div></div>
<div class="c " style="left:399.9px;top:255.21px;width:44.5px;height:29.07px"><div><span class="n">1</span></div></div>
<div class="c " style="left:444.4px;top:255.21px;width:27.1px;height:29.07px"><div>次</div></div>
<div class="c " style="left:471.5px;top:255.21px;width:51.0px;height:29.07px"><div>立即执行</div></div>
<div class="c " style="left:522.5px;top:255.21px;width:50.5px;height:29.07px"><div></div></div>
<div class="c " style="left:573.0px;top:255.21px;width:50.7px;height:29.07px"><div></div></div>
<div class="c " style="left:623.7px;top:255.21px;width:27.0px;height:29.07px"><div></div></div>
<div class="c " style="left:650.7px;top:255.21px;width:47.3px;height:29.07px"><div>管理员</div></div>
<div class="c " style="left:698.0px;top:255.21px;width:57.3px;height:29.07px"><div><span class="n">2023-04-23</span><br><span class="n">13:00</span></div></div>
<div class="c " style="left:755.3px;top:255.21px;width:47.7px;height:29.07px"><div>管理员</div></div>
<div class="c " style="left:803.0px;top:255.21px;width:56.6px;height:29.07px"><div></div></div>
<div class="c " style="left:859.6px;top:255.21px;width:47.9px;height:29.07px"><div></div></div>
<div class="c " style="left:907.5px;top:255.21px;width:57.5px;height:29.07px"><div></div></div>
<div class="c " style="left:965.0px;top:255.21px;width:47.3px;height:29.07px"><div></div></div>
<div class="c " style="left:1012.3px;top:255.21px;width:58.4px;height:29.07px"><div>心电图室</div></div>
<div class="abs" style="left:0;top:285.5px;width:1075px;height:9.2px;background:#f1f1f1"></div>
<div class="abs" style="left:10.6px;top:286.6px;width:1019px;height:7px;background:#c1c1c1"></div>
<div class="abs" style="left:3.2px;top:287.6px;width:0;height:0;border-right:3px solid #a3a3a3;border-top:2.4px solid transparent;border-bottom:2.4px solid transparent"></div>
<div class="abs" style="left:1061.3px;top:287.6px;width:0;height:0;border-left:3px solid #505050;border-top:2.4px solid transparent;border-bottom:2.4px solid transparent"></div>
</div>
</body></html>
